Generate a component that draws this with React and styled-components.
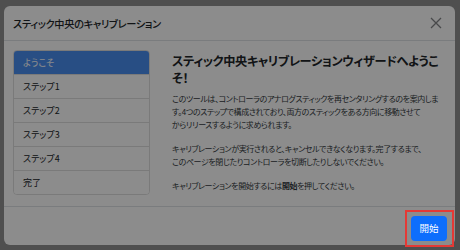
import React from "react";
import styled, { createGlobalStyle } from "styled-components";

const GlobalStyle = createGlobalStyle`
  body {
    margin: 0;
    background: #919191;
    font-family: "Noto Sans CJK JP", "Noto Sans", sans-serif;
    font-feature-settings: "palt";
  }
`;

const steps = ["ようこそ", "ステップ1", "ステップ2", "ステップ3", "ステップ4", "完了"];

const App = () => {
  return (
    <Page>
      <GlobalStyle />
      <Modal>
        <Header>
          <Title>スティック中央のキャリブレーション</Title>
          <CloseButton aria-label="close">
            <svg width="12" height="12" viewBox="0 0 12 12">
              <path d="M1 1L11 11M11 1L1 11" stroke="#212529" strokeWidth="1.3" fill="none" />
            </svg>
          </CloseButton>
        </Header>
        <Body>
          <StepList>
            {steps.map((s, i) => (
              <StepItem key={s} active={i === 0}>
                {s}
              </StepItem>
            ))}
          </StepList>
          <Content>
            <Heading>スティック中央キャリブレーションウィザードへようこそ！</Heading>
            <Text>
              このツールは、コントローラのアナログスティックを再センタリングするのを案内します。4つのステップで構成されており、両方のスティックをある方向に移動させて
              <br />
              からリリースするように求められます。
            </Text>
            <Text>
              キャリブレーションが実行されると、キャンセルできなくなります。完了するまで、
              <br />
              このページを閉じたりコントローラを切断したりしないでください。
            </Text>
            <Text>
              キャリブレーションを開始するには<b>開始</b>を押してください。
            </Text>
          </Content>
        </Body>
        <Footer>
          <Highlight>
            <StartButton>開始</StartButton>
          </Highlight>
        </Footer>
      </Modal>
      <Overlay />
    </Page>
  );
};
export default App;

const Page = styled.div`
  position: relative;
  width: 460px;
  height: 250px;
  overflow: hidden;
  padding: 6px 5px 0 4px;
  box-sizing: border-box;
`;

const Overlay = styled.div`
  position: absolute;
  inset: 0;
  background: rgba(0, 0, 0, 0.45);
  z-index: 10;
`;

const Modal = styled.div`
  width: 451px;
  height: 239px;
  background: #fff;
  border-radius: 6px;
  display: flex;
  flex-direction: column;
  color: #212529;
`;

const Header = styled.div`
  height: 35px;
  flex-shrink: 0;
  display: flex;
  align-items: center;
  justify-content: space-between;
  padding: 0 9px;
  border-bottom: 1px solid #dee2e6;
  box-sizing: border-box;
`;

const Title = styled.h5`
  margin: 0;
  font-size: 10.2px;
  letter-spacing: -0.3px;
  font-weight: 500;
  color: #212529;
`;

const CloseButton = styled.button`
  border: none;
  background: none;
  padding: 0;
  width: 14px;
  height: 14px;
  display: flex;
  align-items: center;
  justify-content: center;
  opacity: 0.55;
  margin-right: 3px;
`;

const Body = styled.div`
  flex: 1;
  min-height: 0;
  display: flex;
  gap: 22px;
  padding: 9px 9px;
  border-bottom: 1px solid #dee2e6;
`;

const StepList = styled.div`
  width: 135px;
  flex-shrink: 0;
  align-self: flex-start;
  border: 1px solid rgba(0, 0, 0, 0.125);
  border-radius: 4px;
  overflow: hidden;
`;

const StepItem = styled.div`
  height: 23px;
  display: flex;
  align-items: center;
  padding: 0 9px;
  font-size: 9px;
  color: ${(p) => (p.active ? "#fff" : "#212529")};
  background: ${(p) => (p.active ? "#4a8ef0" : "#fff")};
  border-top: 1px solid ${(p) => (p.active ? "#4a8ef0" : "rgba(0,0,0,0.125)")};
  &:first-child {
    border-top: none;
  }
`;

const Content = styled.div`
  flex: 1;
  padding-top: 3px;
  padding-right: 5px;
`;

const Heading = styled.h4`
  margin: 0 0 5px;
  font-size: 12.2px;
  line-height: 17px;
  letter-spacing: -0.35px;
  font-weight: 700;
  color: #212529;
`;

const Text = styled.p`
  margin: 0 0 11px;
  font-size: 8px;
  line-height: 13px;
  letter-spacing: -0.4px;
  color: #343a40;
  b {
    font-weight: 700;
  }
`;

const Footer = styled.div`
  height: 38px;
  flex-shrink: 0;
  display: flex;
  align-items: center;
  justify-content: flex-end;
  padding: 0 1px 0 0;
`;

const Highlight = styled.div`
  position: relative;
  z-index: 20;
  display: flex;
  padding: 4px 5px 4px 4px;
  border: 2px solid #e53935;
  margin-bottom: -4px;
`;

const StartButton = styled.button`
  width: 36px;
  height: 25px;
  border: none;
  border-radius: 4px;
  background: #0d6efd;
  color: #fff;
  font-family: "Noto Sans CJK JP", "Noto Sans", sans-serif;
  font-size: 9.5px;
  font-feature-settings: "palt";
`;
